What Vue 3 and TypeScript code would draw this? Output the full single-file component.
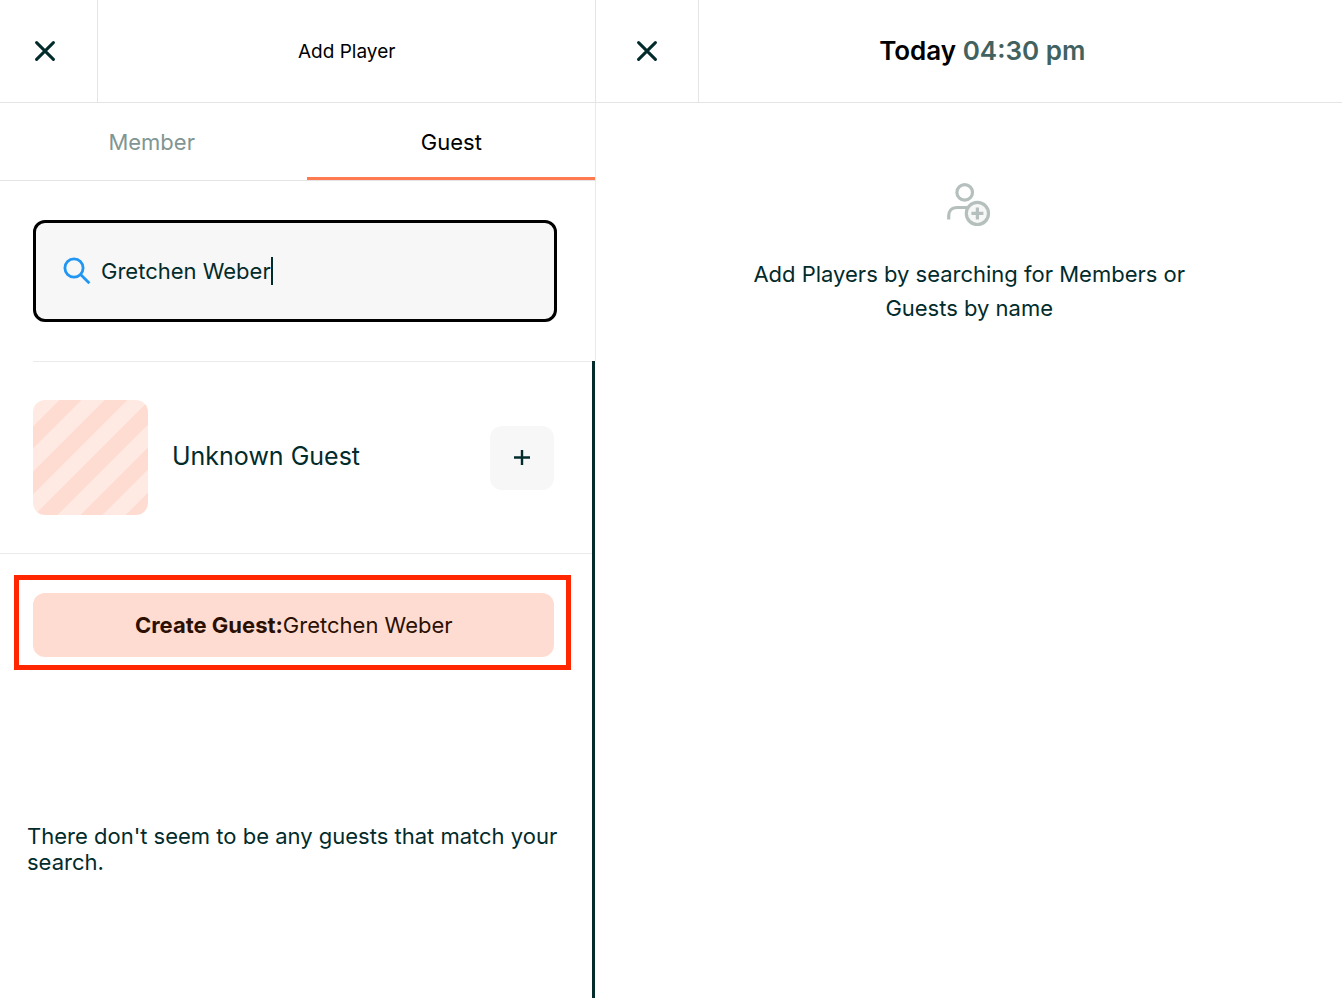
<script setup lang="ts">
import { computed, ref } from 'vue'

type Tab = 'Member' | 'Guest'

const tabs: Tab[] = ['Member', 'Guest']
const activeTab = ref<Tab>('Guest')
const query = ref('Gretchen Weber')
const guestName = computed(() => query.value.trim())
</script>

<template>
  <div class="booking">
    <section class="panel search-panel">
      <header class="bar bar-left">
        <button class="close" type="button" aria-label="Close player search">
          <svg width="20" height="20" viewBox="0 0 20 20" aria-hidden="true">
            <path d="M1.6 1.6 18.4 18.4M18.4 1.6 1.6 18.4" />
          </svg>
        </button>
        <h1 class="bar-title">Add Player</h1>
      </header>

      <nav class="tabs" role="tablist">
        <button
          v-for="tab in tabs"
          :key="tab"
          class="tab"
          :class="{ active: tab === activeTab }"
          type="button"
          role="tab"
          :aria-selected="tab === activeTab"
          @click="activeTab = tab"
        >
          {{ tab }}
        </button>
      </nav>

      <div class="search">
        <label class="search-box">
          <svg class="search-icon" width="28" height="28" viewBox="0 0 28 28" aria-hidden="true">
            <circle cx="11" cy="11" r="9.1" />
            <path d="M17.6 17.6 26.4 26.2" />
          </svg>
          <input v-model="query" class="search-input" type="text" aria-label="Search guests by name" />
          <span class="caret" aria-hidden="true"></span>
        </label>
      </div>

      <div class="results">
        <div class="guest">
          <div class="avatar"></div>
          <span class="guest-name">Unknown Guest</span>
          <button class="add" type="button" aria-label="Add unknown guest">
            <svg width="16" height="16" viewBox="0 0 16 16" aria-hidden="true">
              <path d="M0 7.5H16M8 0V15" />
            </svg>
          </button>
        </div>

        <div class="highlight">
          <button class="create" type="button"><strong>Create Guest:</strong><span>{{ guestName }}</span></button>
        </div>

        <p class="no-match">There don't seem to be any guests that match your search.</p>
      </div>
    </section>

    <section class="panel">
      <header class="bar bar-right">
        <button class="close" type="button" aria-label="Close booking">
          <svg width="20" height="20" viewBox="0 0 20 20" aria-hidden="true">
            <path d="M1.6 1.6 18.4 18.4M18.4 1.6 1.6 18.4" />
          </svg>
        </button>
        <h2 class="bar-title when">Today <span class="time">04:30 pm</span></h2>
      </header>

      <div class="empty">
        <svg class="empty-icon" width="44" height="44" viewBox="0 0 44 44" aria-hidden="true">
          <circle cx="17.7" cy="9.4" r="7.8" />
          <path d="M1.7 36.5V33C1.7 28 4.8 24.5 10 24.5H20" />
          <circle class="badge" cx="30.4" cy="30.4" r="11.1" />
          <path d="M24.4 30.4H36.4M30.4 24.4V36.4" />
        </svg>
        <p class="empty-text">Add Players by searching for Members or Guests by name</p>
      </div>
    </section>
  </div>
</template>

<style>
body {
  margin: 0;
  background: #fff;
}
</style>

<style scoped>
.booking {
  display: grid;
  grid-template-columns: minmax(0, 4fr) minmax(0, 5fr);
  min-height: 100vh;
  color: #022b2b;
  font-family: Inter, "Liberation Sans", sans-serif;
  font-size: 22px;
}

button,
input {
  margin: 0;
  padding: 0;
  border: 0;
  background: none;
  color: inherit;
  font: inherit;
}

button {
  cursor: pointer;
}

svg {
  display: block;
  fill: none;
}

.panel {
  display: flex;
  flex-direction: column;
}

.bar {
  display: grid;
  height: 102px;
  border-bottom: 1px solid #e3e5e5;
}

.bar-left {
  grid-template-columns: 98px 1fr;
  border-right: 1px solid #e3e5e5;
}

.bar-right {
  grid-template-columns: 103px 1fr;
}

.close {
  display: grid;
  place-items: center;
  border-right: 1px solid #e3e5e5;
}

.bar-left .close {
  padding-right: 8px;
}

.close svg {
  stroke: #022b2b;
  stroke-width: 3;
  stroke-linecap: round;
}

.bar-title {
  margin: 0;
  align-self: center;
  text-align: center;
  color: #000;
  font-size: 19px;
  font-weight: 400;
}

.bar-title.when {
  padding: 0 77px 2px 0;
  font-size: 26px;
  font-weight: 600;
}

.time {
  color: #426260;
}

.tabs {
  display: grid;
  grid-template-columns: 16fr 15fr;
  height: 77px;
  border-right: 1px solid #e9ebeb;
  border-bottom: 1px solid #e3e5e5;
}

.tab {
  padding: 4px 4px 0 0;
  border-bottom: 3px solid transparent;
  color: #819592;
}

.tab.active {
  padding-right: 0;
  border-bottom-color: #ff7a51;
  color: #000;
}

.search {
  padding: 39px 38px 39px 33px;
  border-right: 1px solid #e9ebeb;
}

.search-box {
  display: flex;
  align-items: center;
  height: 96px;
  padding-left: 27px;
  border: 3px solid #000;
  border-radius: 12px;
  background: #f7f7f7;
  cursor: text;
}

.search-icon {
  margin-right: 10px;
  stroke: #2196f3;
  stroke-width: 2.8;
}

.search-input {
  field-sizing: content;
  max-width: 400px;
  outline: 0;
  caret-color: transparent;
}

.caret {
  width: 2px;
  height: 28px;
  background: #022b2b;
}

.results {
  flex: 1;
  margin-right: 1px;
  border-right: 3px solid #022b2b;
}

.guest {
  position: relative;
  display: flex;
  align-items: center;
  padding: 39px 38px 38px 33px;
  border-bottom: 1px solid #e9ebeb;
}

.guest::before {
  content: "";
  position: absolute;
  inset: 0 0 auto 33px;
  border-top: 1px solid #e9ebeb;
}

.avatar {
  flex: none;
  width: 115px;
  height: 115px;
  border-radius: 12px;
  background: repeating-linear-gradient(-45deg, #ffdcd1 0 16px, #ffeae3 16px 32px);
}

.guest-name {
  flex: 1;
  padding: 0 0 4px 24px;
  font-size: 25px;
}

.add {
  display: grid;
  place-items: center;
  width: 64px;
  height: 64px;
  border-radius: 12px;
  background: #f7f7f7;
}

.add svg {
  stroke: #022b2b;
  stroke-width: 2.4;
}

.highlight {
  margin: 21px 21px 0 14px;
  padding: 13px 12px 8px 14px;
  border: 5px solid #ff2600;
}

.create {
  display: block;
  width: 100%;
  height: 64px;
  border-radius: 12px;
  background: #ffdcd1;
  color: #2b1002;
}

.create strong {
  font-weight: 700;
}

.no-match {
  margin: 153px 27px 0;
  line-height: 26px;
}

.empty {
  display: flex;
  flex-direction: column;
  align-items: center;
  padding: 80px 24px 0;
}

.empty-icon {
  stroke: #b5c0be;
  stroke-width: 3.2;
}

.badge {
  fill: #f7f7f7;
}

.empty-text {
  max-width: 440px;
  margin: 30px 0 0;
  line-height: 34px;
  text-align: center;
}
</style>
